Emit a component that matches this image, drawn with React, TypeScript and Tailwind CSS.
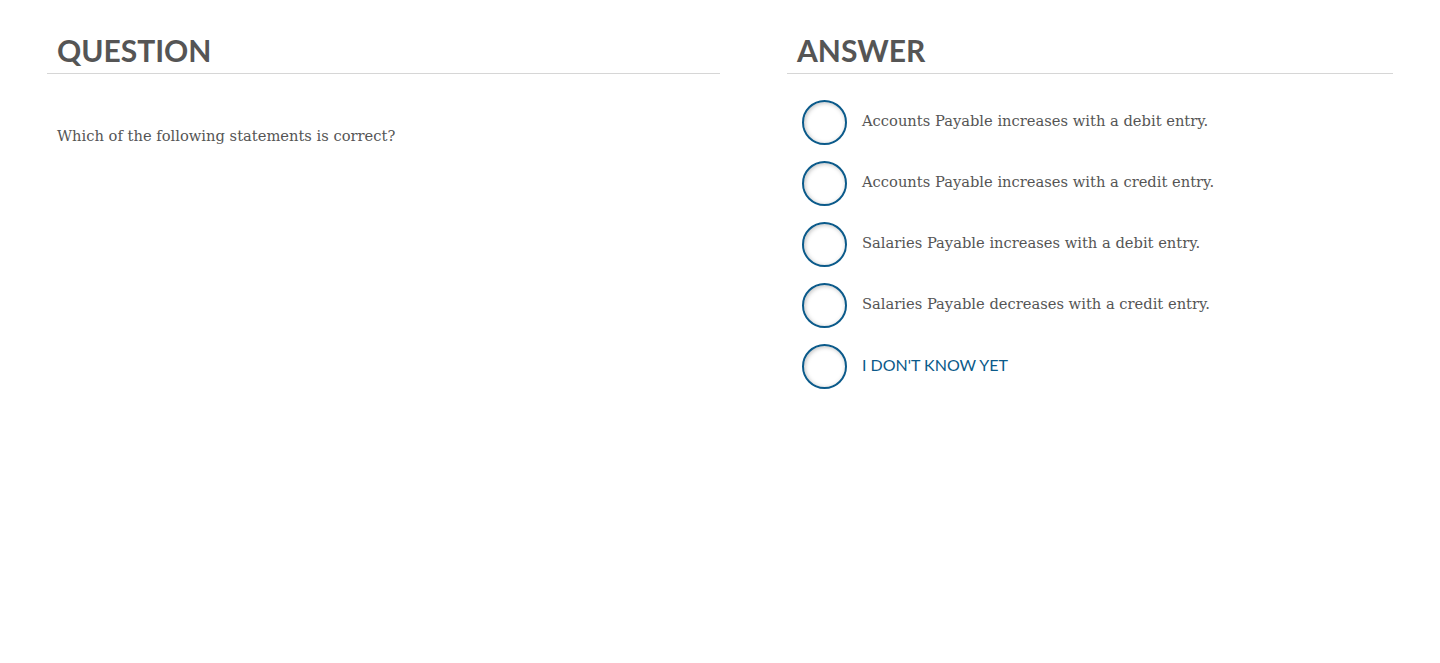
import React from "react";

const answers = [
  "Accounts Payable increases with a debit entry.",
  "Accounts Payable increases with a credit entry.",
  "Salaries Payable increases with a debit entry.",
  "Salaries Payable decreases with a credit entry.",
];

function Radio() {
  return (
    <span className="block h-[45px] w-[45px] shrink-0 rounded-full border-2 border-[#0b5a8a] bg-white shadow-[inset_1px_1px_4px_rgba(0,0,0,0.25)]" />
  );
}

export default function App() {
  return (
    <div className="flex min-h-[663px] w-full gap-[67px] bg-white px-[47px] pt-[32px] font-['Lato',sans-serif]">
      <section className="w-[673px] shrink-0">
        <h2 className="border-b border-[#d6d6d6] px-[10px] pb-[5px] text-[30px] font-bold leading-[36px] text-[#555555]">
          QUESTION
        </h2>
        <p className="mt-[51px] px-[10px] font-['DejaVu_Serif',serif] text-[14.7px] text-[#555555]">
          Which of the following statements is correct?
        </p>
      </section>

      <section className="w-[606px] shrink-0">
        <h2 className="border-b border-[#d6d6d6] px-[10px] pb-[5px] text-[30px] font-bold leading-[36px] text-[#555555]">
          ANSWER
        </h2>
        <ul className="mt-[26px] flex flex-col gap-[16px] pl-[15px]">
          {answers.map((a) => (
            <li key={a} className="flex h-[45px] items-center gap-[15px]">
              <Radio />
              <span className="-mt-[3px] font-['DejaVu_Serif',serif] text-[14.7px] text-[#555555]">
                {a}
              </span>
            </li>
          ))}
          <li className="flex h-[45px] items-center gap-[15px]">
            <Radio />
            <span className="-mt-[3px] text-[16px] text-[#0b5a8a]">I DON'T KNOW YET</span>
          </li>
        </ul>
      </section>
    </div>
  );
}
